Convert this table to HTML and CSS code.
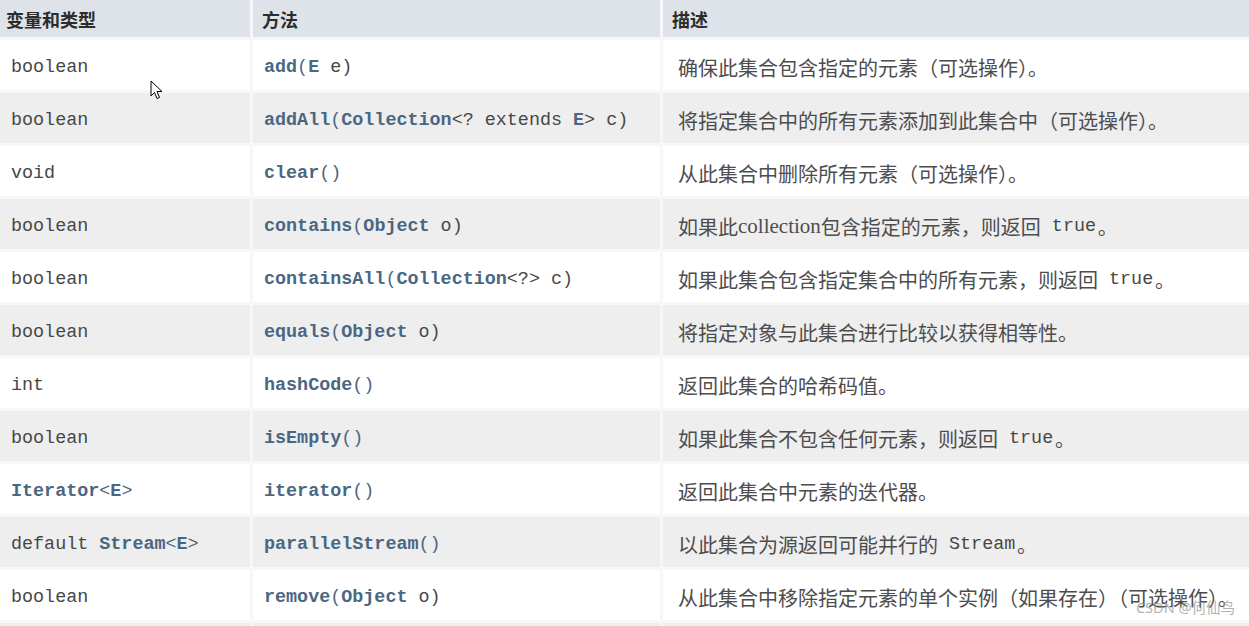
FILE: index.html
```html
<!DOCTYPE html>
<html lang="zh-CN">
<head>
<meta charset="utf-8">
<title>Collection 方法</title>
<link rel="stylesheet" href="styles.css">
</head>
<body>
<div class="table">
  <div class="th">变量和类型</div>
  <div class="th">方法</div>
  <div class="th">描述</div>

  <div class="td c1"><code>boolean</code></div>
  <div class="td c2"><code><b>add</b><span class="p">(</span><b>E</b> e)</code></div>
  <div class="td c3">确保此集合包含指定的元素（可选操作）。</div>

  <div class="td alt c1"><code>boolean</code></div>
  <div class="td alt c2"><code><b>addAll</b><span class="p">(</span><b>Collection</b>&lt;? extends <b>E</b>&gt; c)</code></div>
  <div class="td alt c3">将指定集合中的所有元素添加到此集合中（可选操作）。</div>

  <div class="td c1"><code>void</code></div>
  <div class="td c2"><code><b>clear</b><span class="p">()</span></code></div>
  <div class="td c3">从此集合中删除所有元素（可选操作）。</div>

  <div class="td alt c1"><code>boolean</code></div>
  <div class="td alt c2"><code><b>contains</b><span class="p">(</span><b>Object</b> o)</code></div>
  <div class="td alt c3">如果此<span class="serif">collection</span>包含指定的元素，则返回<code>&nbsp;true</code><span class="sp"> </span>。</div>

  <div class="td c1"><code>boolean</code></div>
  <div class="td c2"><code><b>containsAll</b><span class="p">(</span><b>Collection</b>&lt;?&gt; c)</code></div>
  <div class="td c3">如果此集合包含指定集合中的所有元素，则返回<code>&nbsp;true</code><span class="sp"> </span>。</div>

  <div class="td alt c1"><code>boolean</code></div>
  <div class="td alt c2"><code><b>equals</b><span class="p">(</span><b>Object</b> o)</code></div>
  <div class="td alt c3">将指定对象与此集合进行比较以获得相等性。</div>

  <div class="td c1"><code>int</code></div>
  <div class="td c2"><code><b>hashCode</b><span class="p">()</span></code></div>
  <div class="td c3">返回此集合的哈希码值。</div>

  <div class="td alt c1"><code>boolean</code></div>
  <div class="td alt c2"><code><b>isEmpty</b><span class="p">()</span></code></div>
  <div class="td alt c3">如果此集合不包含任何元素，则返回<code>&nbsp;true</code><span class="sp"> </span>。</div>

  <div class="td c1"><code><b>Iterator</b><span class="p">&lt;</span><b>E</b><span class="p">&gt;</span></code></div>
  <div class="td c2"><code><b>iterator</b><span class="p">()</span></code></div>
  <div class="td c3">返回此集合中元素的迭代器。</div>

  <div class="td alt c1"><code>default <b>Stream</b><span class="p">&lt;</span><b>E</b><span class="p">&gt;</span></code></div>
  <div class="td alt c2"><code><b>parallelStream</b><span class="p">()</span></code></div>
  <div class="td alt c3">以此集合为源返回可能并行的<code>&nbsp;Stream</code><span class="sp"> </span>。</div>

  <div class="td c1"><code>boolean</code></div>
  <div class="td c2"><code><b>remove</b><span class="p">(</span><b>Object</b> o)</code></div>
  <div class="td c3">从此集合中移除指定元素的单个实例（如果存在）（可选操作）。</div>

  <div class="td alt"></div>
  <div class="td alt"></div>
  <div class="td alt"></div>
</div>

<div class="watermark">CSDN @何仙鸟</div>

<svg class="cursor" width="14" height="21" viewBox="0 0 14 21">
  <path d="M1 1 L1 16 L4.5 12.5 L7 18.5 L9.5 17.5 L7 11.5 L12 11.5 Z" fill="#fff" stroke="#000" stroke-width="1" stroke-linejoin="miter"/>
</svg>
</body>
</html>
```

FILE: styles.css
```css
html, body {
  margin: 0;
  padding: 0;
  background: #ffffff;
  overflow: hidden;
}

body {
  width: 1249px;
  height: 626px;
  position: relative;
  font-family: "Noto Sans CJK SC", "Noto Sans", sans-serif;
  color: #474747;
}

.table {
  display: grid;
  grid-template-columns: 250px 407px 1fr;
  grid-template-rows: 37px repeat(11, 50px) 3px;
  gap: 3px;
  background: #f7f7f7;
  height: 626px;
  overflow: hidden;
}

.th {
  background: #dee3e9;
  color: #2c2c2c;
  font-weight: 700;
  font-size: 18px;
  display: flex;
  align-items: center;
  padding-left: 9px;
  padding-top: 1px;
}

.th:first-child {
  padding-left: 6px;
}

.td {
  background: #ffffff;
  display: flex;
  align-items: center;
  padding-left: 11px;
  padding-top: 5px;
  white-space: pre;
}

.td.alt {
  background: #eeeeef;
}

.c3 {
  padding-left: 15px;
  font-size: 20px;
  color: #4d4d4d;
}

.sp {
  font-size: 8px;
}

code {
  font-family: "Liberation Mono", "DejaVu Sans Mono", monospace;
  font-size: 18.4px;
  color: #474747;
}

code b {
  color: #4a6782;
  font-weight: 700;
}

code .p {
  color: #4a6782;
}

.serif {
  font-family: "Liberation Serif", serif;
  font-size: 21px;
}

.watermark {
  position: absolute;
  right: 14px;
  bottom: 9px;
  font-family: "Noto Sans", "Noto Sans CJK SC", sans-serif;
  font-size: 14.5px;
  color: rgba(150, 150, 150, 0.75);
}

.cursor {
  position: absolute;
  left: 150px;
  top: 80px;
}
```
